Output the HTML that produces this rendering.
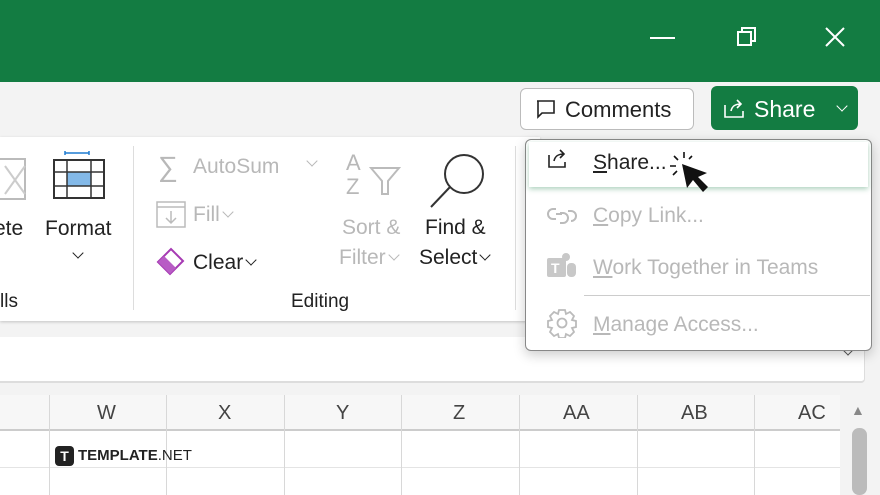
<!DOCTYPE html>
<html><head><style>
body{margin:0;width:880px;height:495px;overflow:hidden;background:#f3f3f3;font-family:"Liberation Sans",sans-serif;position:relative}
.a{position:absolute}
.t{position:absolute;font-size:20px;color:#222;white-space:nowrap}
.g{color:#b8b8b8}
.c{display:inline-block;width:7px;height:7px;border-right:1.5px solid currentColor;border-bottom:1.5px solid currentColor;transform:rotate(45deg);margin:0 0 5px 4px}
</style></head><body>
<div class="a" style="left:0;top:0;width:880px;height:82px;background:#137c42"></div>
<div class="a" style="left:650px;top:37px;width:25px;height:2px;background:#fff"></div>
<svg class="a" style="left:737px;top:27px" width="20" height="20"><rect x="1" y="5" width="13" height="13" fill="none" stroke="#fff" stroke-width="2"/><path d="M5 5V1h13v13h-4" fill="none" stroke="#fff" stroke-width="2"/></svg>
<svg class="a" style="left:825px;top:27px" width="20" height="20"><path d="M1 1L19 19M19 1L1 19" stroke="#fff" stroke-width="2"/></svg>
<div class="a" style="left:520px;top:88px;width:172px;height:40px;border:1px solid #bbb;border-radius:6px;background:#fff"></div>
<svg class="a" style="left:535px;top:99px" width="22" height="20"><path d="M2 2h17v12H7l-4 4V2z" fill="none" stroke="#222" stroke-width="1.6"/></svg>
<div class="t" style="left:565px;top:97px;font-size:22px">Comments</div>
<div class="a" style="left:711px;top:86px;width:147px;height:44px;border-radius:6px;background:#137c42"></div>
<svg class="a" style="left:723px;top:97px" width="24" height="22"><path d="M2 8v12h18v-6M8 14c1-5 4-7 10-7M14 3l4 4-4 4" fill="none" stroke="#fff" stroke-width="1.6"/></svg>
<div class="t" style="left:754px;top:96px;color:#fff;font-size:23px">Share</div>
<div class="t" style="left:834px;top:98px;color:#fff"><span class="c"></span></div>
<div class="a" style="left:0;top:137px;width:540px;height:184px;background:#fff;box-shadow:0 1px 3px rgba(0,0,0,.2)"></div>
<div class="a" style="left:133px;top:146px;width:1px;height:164px;background:#ddd"></div>
<div class="a" style="left:515px;top:146px;width:1px;height:164px;background:#ddd"></div>
<svg class="a" style="left:0;top:158px" width="28" height="44"><rect x="-5" y="1" width="30" height="40" fill="none" stroke="#bbb" stroke-width="2"/><path d="M5 8L25 36M25 8L5 36" stroke="#ccc" stroke-width="2"/></svg>
<svg class="a" style="left:52px;top:150px" width="54" height="50"><path d="M13 3h24M13 1v4M37 1v4" stroke="#1e7bd0" stroke-width="1.5"/><rect x="2" y="10" width="50" height="38" fill="none" stroke="#333" stroke-width="2"/><rect x="15" y="22" width="24" height="14" fill="#83b9e8" stroke="#1e7bd0"/><path d="M15 10v38M39 10v38M2 22h50M2 36h50" stroke="#333" stroke-width="1.5"/></svg>
<div class="t" style="left:-6px;top:217px;font-size:21px">ete</div>
<div class="t" style="left:45px;top:217px;font-size:21px">Format</div>
<div class="t" style="left:70px;top:245px"><span class="c"></span></div>
<div class="t" style="left:0;top:291px;font-size:19px">lls</div>
<div class="t g" style="left:158px;top:151px;font-size:28px">∑</div>
<div class="t g" style="left:193px;top:155px;font-size:21px">AutoSum</div>
<div class="t g" style="left:304px;top:153px"><span class="c"></span></div>
<svg class="a" style="left:156px;top:201px" width="30" height="28"><rect x="1" y="1" width="28" height="25" fill="none" stroke="#bbb" stroke-width="1.5"/><path d="M1 6h28M15 10v12M10 17l5 5 5-5" fill="none" stroke="#bbb" stroke-width="1.5"/></svg>
<div class="t g" style="left:193px;top:203px;font-size:21px">Fill<span class="c"></span></div>
<svg class="a" style="left:156px;top:246px" width="30" height="30"><path d="M2 16L15 3l12 12-13 13z" fill="none" stroke="#a63ab3" stroke-width="2"/><path d="M2 16l6-6 12 12-6 6z" fill="#b85cc5"/></svg>
<div class="t" style="left:193px;top:251px;font-size:21px">Clear<span class="c"></span></div>
<div class="t g" style="left:346px;top:150px;font-size:22px">A</div>
<div class="t g" style="left:346px;top:174px;font-size:22px">Z</div>
<svg class="a" style="left:369px;top:165px" width="32" height="32"><path d="M2 3h28L19 16v13h-6V16z" fill="none" stroke="#bbb" stroke-width="2"/></svg>
<div class="t g" style="left:342px;top:216px;font-size:21px">Sort &amp;</div>
<div class="t g" style="left:339px;top:246px;font-size:21px">Filter<span class="c"></span></div>
<svg class="a" style="left:428px;top:150px" width="60" height="60"><circle cx="36" cy="24" r="19" fill="none" stroke="#333" stroke-width="2"/><path d="M22 37L3 57" stroke="#333" stroke-width="2"/></svg>
<div class="t" style="left:425px;top:216px;font-size:21px">Find &amp;</div>
<div class="t" style="left:419px;top:246px;font-size:21px">Select<span class="c"></span></div>
<div class="t" style="left:291px;top:291px;font-size:19px">Editing</div>
<div class="a" style="left:0;top:337px;width:864px;height:44px;background:#fff;border-bottom:2px solid #ddd;border-right:1px solid #ddd;border-radius:0 0 4px 0"></div>
<div class="t" style="left:840px;top:342px;color:#555"><span class="c"></span></div>
<div class="a" style="left:0;top:395px;width:840px;height:100px;background:#fff"></div>
<div class="a" style="left:0;top:395px;width:840px;height:34px;background:#f7f7f7;border-bottom:2px solid #ccc"></div>
<div class="a" style="left:0;top:467px;width:840px;height:1px;background:#e4e4e4"></div>
<div class="a" style="left:49px;top:395px;width:1px;height:100px;background:#d8d8d8"></div>
<div class="a" style="left:166px;top:395px;width:1px;height:100px;background:#d8d8d8"></div>
<div class="a" style="left:284px;top:395px;width:1px;height:100px;background:#d8d8d8"></div>
<div class="a" style="left:401px;top:395px;width:1px;height:100px;background:#d8d8d8"></div>
<div class="a" style="left:519px;top:395px;width:1px;height:100px;background:#d8d8d8"></div>
<div class="a" style="left:637px;top:395px;width:1px;height:100px;background:#d8d8d8"></div>
<div class="a" style="left:754px;top:395px;width:1px;height:100px;background:#d8d8d8"></div>
<div class="t" style="left:97px;top:402px;color:#444">W</div>
<div class="t" style="left:218px;top:402px;color:#444">X</div>
<div class="t" style="left:336px;top:402px;color:#444">Y</div>
<div class="t" style="left:453px;top:402px;color:#444">Z</div>
<div class="t" style="left:563px;top:402px;color:#444">AA</div>
<div class="t" style="left:681px;top:402px;color:#444">AB</div>
<div class="t" style="left:798px;top:402px;color:#444">AC</div>
<div class="a" style="left:55px;top:446px;width:19px;height:20px;background:#222;border-radius:4px;color:#fff;font-size:14px;font-weight:bold;text-align:center;line-height:20px">T</div>
<div class="t" style="left:78px;top:447px;font-size:15px;font-weight:bold;color:#222">TEMPLATE<span style="font-weight:normal">.NET</span></div>
<div class="t" style="left:851px;top:402px;font-size:14px;color:#888">▲</div>
<div class="a" style="left:852px;top:428px;width:15px;height:67px;background:#bbb;border-radius:7px"></div>
<div class="a" style="left:525px;top:139px;width:345px;height:210px;background:#fff;border:1px solid #888;border-radius:6px;box-shadow:0 4px 12px rgba(0,0,0,.2)"></div>
<div class="a" style="left:529px;top:142px;width:339px;height:45px;background:#fff;box-shadow:0 2px 5px rgba(19,124,66,.35)"></div>
<svg class="a" style="left:547px;top:147px" width="24" height="22"><path d="M2 8v12h16v-5M7 14c1-5 4-7 10-7M13 3l4 4-4 4" fill="none" stroke="#222" stroke-width="1.6"/></svg>
<div class="t" style="left:593px;top:151px;font-size:21px"><u>S</u>hare...</div>
<svg class="a" style="left:668px;top:150px" width="56" height="56"><path d="M16 2v6M6 6l4 4M24 6l-3 3M2 16h6M5 25l4-4" stroke="#111" stroke-width="1.6"/><path d="M14 14l5 24 6-8 10 12 5-5-10-10 9-4z" fill="#111"/></svg>
<svg class="a" style="left:546px;top:203px" width="32" height="24"><path d="M10 6H7a5 5 0 000 10h3M14 10h3a5 5 0 010 10h-3M10 11h6M22 8h3a5 5 0 010 10" fill="none" stroke="#bbb" stroke-width="2"/></svg>
<div class="t g" style="left:593px;top:204px;font-size:21px"><u>C</u>opy Link...</div>
<svg class="a" style="left:546px;top:252px" width="32" height="30"><rect x="1" y="6" width="19" height="19" rx="2" fill="#c8c8c8"/><circle cx="20" cy="5" r="4" fill="#c8c8c8"/><rect x="21" y="11" width="9" height="14" rx="4" fill="#c8c8c8"/><text x="5" y="21" fill="#fff" font-size="14" font-weight="bold" font-family="Liberation Sans">T</text></svg>
<div class="t g" style="left:593px;top:256px;font-size:21px"><u>W</u>ork Together in Teams</div>
<div class="a" style="left:584px;top:295px;width:286px;height:1px;background:#ccc"></div>
<svg class="a" style="left:547px;top:308px" width="30" height="30"><circle cx="15" cy="15" r="4.5" fill="none" stroke="#bbb" stroke-width="1.8"/><path d="M12 2h6l1 4 4-2 4 4-2 4 4 1v6l-4 1 2 4-4 4-4-2-1 4h-6l-1-4-4 2-4-4 2-4-4-1v-6l4-1-2-4 4-4 4 2z" fill="none" stroke="#bbb" stroke-width="1.8"/></svg>
<div class="t g" style="left:593px;top:313px;font-size:21px"><u>M</u>anage Access...</div>
</body></html>
